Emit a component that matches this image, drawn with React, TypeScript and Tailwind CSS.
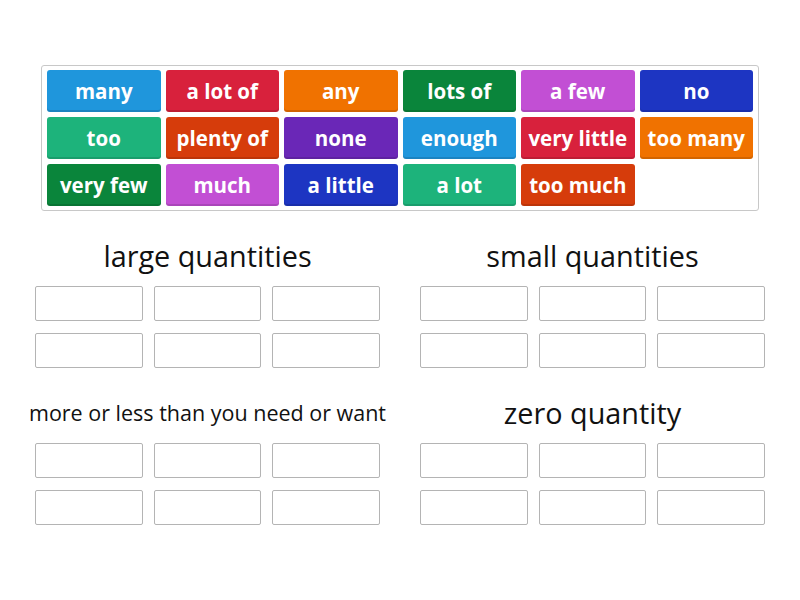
import React from "react";

const TILES = [
  { label: "many", color: "bg-[#1f96dc]" },
  { label: "a lot of", color: "bg-[#d8213c]" },
  { label: "any", color: "bg-[#f07200]" },
  { label: "lots of", color: "bg-[#0a853b]" },
  { label: "a few", color: "bg-[#c24fd4]" },
  { label: "no", color: "bg-[#1d35c2]" },
  { label: "too", color: "bg-[#1db37b]" },
  { label: "plenty of", color: "bg-[#d63c0b]" },
  { label: "none", color: "bg-[#6a27b7]" },
  { label: "enough", color: "bg-[#1f96dc]" },
  { label: "very little", color: "bg-[#d8213c]" },
  { label: "too many", color: "bg-[#f07200]" },
  { label: "very few", color: "bg-[#0a853b]" },
  { label: "much", color: "bg-[#c24fd4]" },
  { label: "a little", color: "bg-[#1d35c2]" },
  { label: "a lot", color: "bg-[#1db37b]" },
  { label: "too much", color: "bg-[#d63c0b]" },
];

const GROUPS = [
  { title: "large quantities", small: false },
  { title: "small quantities", small: false },
  { title: "more or less than you need or want", small: true },
  { title: "zero quantity", small: false },
];

function Tile({ label, color }: { label: string; color: string }) {
  return (
    <div
      className={`${color} h-[42px] rounded-[3px] flex items-center justify-center text-white font-bold text-[20.5px] leading-none shadow-[inset_0_-2px_0_rgba(0,0,0,0.12)]`}
    >
      {label}
    </div>
  );
}

function Group({ title, small }: { title: string; small: boolean }) {
  return (
    <div className="flex flex-col">
      <div
        className={`h-[40px] flex items-center justify-center text-[#111] whitespace-nowrap ${
          small ? "text-[21.5px]" : "text-[28.8px]"
        }`}
      >
        {title}
      </div>
      <div className="mt-[10px] grid grid-cols-3 gap-x-[11px] gap-y-[12px]">
        {Array.from({ length: 6 }).map((_, i) => (
          <div key={i} className="h-[35px] border border-[#b4b4b4] rounded-[2px] bg-white" />
        ))}
      </div>
    </div>
  );
}

export default function App() {
  return (
    <div
      className="w-[800px] h-[600px] bg-white overflow-hidden"
      style={{ fontFamily: '"Open Sans", "Noto Sans", sans-serif' }}
    >
      {/* Word bank */}
      <div className="pt-[65px] flex justify-center">
        <div className="w-[718px] border border-[#c8c8c8] rounded-[3px] pt-[4px] pb-[4px] px-[5px] grid grid-cols-6 gap-x-[5px] gap-y-[5px]">
          {TILES.map((t) => (
            <Tile key={t.label} label={t.label} color={t.color} />
          ))}
        </div>
      </div>

      {/* Groups */}
      <div className="mt-[25px] mx-auto w-[730px] grid grid-cols-2 gap-x-[40px] gap-y-[25px]">
        {GROUPS.map((g) => (
          <Group key={g.title} title={g.title} small={g.small} />
        ))}
      </div>
    </div>
  );
}
